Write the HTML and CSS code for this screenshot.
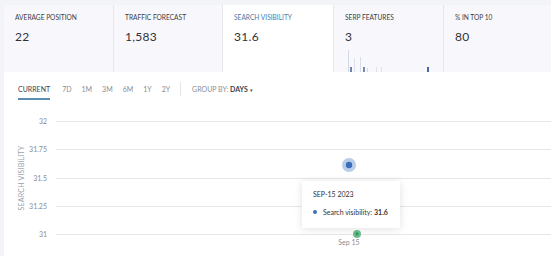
FILE: index.html
```html
<!DOCTYPE html>
<html lang="en">
<head>
  <meta charset="UTF-8">
  <title>Search Visibility</title>
  <link rel="stylesheet" href="styles.css">
</head>
<body>

  <!-- Metric cards -->
  <div class="metrics">
    <div class="card">
      <p class="label">Average Position</p>
      <p class="value">22</p>
    </div>
    <div class="card">
      <p class="label">Traffic Forecast</p>
      <p class="value">1,583</p>
    </div>
    <div class="card active">
      <p class="label">Search Visibility</p>
      <p class="value">31.6</p>
    </div>
    <div class="card">
      <p class="label">SERP Features</p>
      <p class="value">3</p>
      <svg class="mini" width="100" height="26" viewBox="0 0 100 26">
        <rect x="12" y="4" width="1" height="22" fill="#d3d8e6"/>
        <rect x="14" y="21" width="2" height="5" fill="#7080a8"/>
        <rect x="18" y="12" width="1" height="14" fill="#dde1ec"/>
        <rect x="24" y="11" width="1" height="15" fill="#d8dce8"/>
        <rect x="27" y="21" width="2" height="5" fill="#7a88b0"/>
        <rect x="31" y="22" width="1" height="4" fill="#d3d8e6"/>
        <rect x="40" y="21" width="1" height="5" fill="#e0e3ec"/>
        <rect x="45" y="21" width="1" height="5" fill="#e0e3ec"/>
        <rect x="91" y="21" width="2" height="5" fill="#4a68a8"/>
      </svg>
    </div>
    <div class="card">
      <p class="label">% in Top 10</p>
      <p class="value">80</p>
    </div>
  </div>

  <!-- Chart panel -->
  <div class="panel">
    <div class="toolbar">
      <span class="tab current">Current</span>
      <span class="tab">7D</span>
      <span class="tab">1M</span>
      <span class="tab">3M</span>
      <span class="tab">6M</span>
      <span class="tab">1Y</span>
      <span class="tab">2Y</span>
      <span class="sep"></span>
      <span class="group">Group by: <b>Days</b> <span class="caret">&#9662;</span></span>
    </div>

    <div class="chart">
      <svg width="547" height="150" viewBox="0 0 547 150">
        <text class="axis-title" transform="translate(20 72) rotate(-90)" text-anchor="middle">SEARCH VISIBILITY</text>
        <g class="ticks" text-anchor="end">
          <text x="43" y="18">32</text>
          <text x="43" y="46">31.75</text>
          <text x="43" y="75">31.5</text>
          <text x="43" y="103">31.25</text>
          <text x="43" y="131">31</text>
        </g>
        <g stroke="#e6e7ea" stroke-width="1">
          <line x1="52" y1="15.5" x2="547" y2="15.5"/>
          <line x1="52" y1="43.5" x2="547" y2="43.5"/>
          <line x1="52" y1="72.5" x2="547" y2="72.5"/>
          <line x1="52" y1="100.5" x2="547" y2="100.5"/>
          <line x1="52" y1="128.5" x2="547" y2="128.5"/>
        </g>
        <circle cx="345" cy="59" r="7" fill="#b9cde8"/>
        <circle cx="345" cy="59" r="3.2" fill="#3d6fb8"/>
        <circle cx="353" cy="128" r="4" fill="#6cbf8e"/>
        <circle cx="353" cy="128" r="1.8" fill="#3d9a66"/>
        <text class="xlabel" x="345" y="139" text-anchor="middle">Sep 15</text>
      </svg>

      <div class="tooltip">
        <p class="tip-date">SEP-15 2023</p>
        <p class="tip-row"><span class="dot"></span>Search visibility: <b>31.6</b></p>
      </div>
    </div>
  </div>

</body>
</html>
```

FILE: styles.css
```css
body {
  margin: 0;
  font-family: Lato, "Open Sans", sans-serif;
  background: #f3f4f7;
  color: #333;
  width: 551px;
  height: 256px;
  overflow: hidden;
}
p {
  margin: 0;
}
.metrics {
  display: grid;
  grid-template-columns: 109px 109px 111px 110px 108px;
  padding: 5px 0 0 4px;
  height: 67px;
}
.card {
  position: relative;
  background: #f8f8fc;
  border-left: 1px solid #e6e7ec;
  padding: 8px 0 0 11px;
}
.card:first-child {
  border-left: none;
}
.card.active {
  background: #fff;
}
.label {
  font-size: 6.6px;
  text-transform: uppercase;
  color: #3a3d44;
}
.active .label {
  color: #4b7aa6;
}
.value {
  margin-top: 8px;
  font-size: 12px;
  color: #2f3238;
  letter-spacing: 0.3px;
}
.mini {
  position: absolute;
  left: 2px;
  bottom: 0;
}
.panel {
  margin-left: 4px;
  background: #fff;
  height: 184px;
}
.toolbar {
  display: flex;
  align-items: center;
  height: 34px;
  padding-left: 14px;
  font-size: 7px;
  color: #8a8e96;
  text-transform: uppercase;
}
.tab {
  margin-right: 10px;
}
.tab.current {
  color: #3b4350;
  position: relative;
  margin-right: 12px;
}
.tab.current::after {
  content: "";
  position: absolute;
  left: 0;
  right: 0;
  bottom: -7px;
  height: 2px;
  background: #5b8db0;
}
.sep {
  width: 1px;
  height: 14px;
  background: #e3e4e8;
  margin: 0 11px 0 0;
}
.group b {
  color: #3b4350;
}
.caret {
  font-size: 5px;
  color: #3b4350;
}
.chart {
  position: relative;
}
.chart svg {
  display: block;
}
.ticks text, .xlabel {
  font-size: 7px;
  fill: #8a8e96;
}
.axis-title {
  font-size: 7px;
  fill: #9aa0aa;
  letter-spacing: 0.2px;
}
.tooltip {
  position: absolute;
  left: 298px;
  top: 75px;
  width: 98px;
  height: 47px;
  box-sizing: border-box;
  background: #fff;
  box-shadow: 0 1px 8px rgba(0, 0, 0, 0.12);
  padding: 9px 0 0 11px;
  font-size: 7px;
  color: #2f3238;
}
.tip-date {
  margin-bottom: 10px;
}
.tip-row {
  display: flex;
  align-items: center;
}
.dot {
  width: 4px;
  height: 4px;
  border-radius: 50%;
  background: #3d6fb8;
  margin-right: 6px;
}
.tip-row b {
  margin-left: 2px;
}
```
